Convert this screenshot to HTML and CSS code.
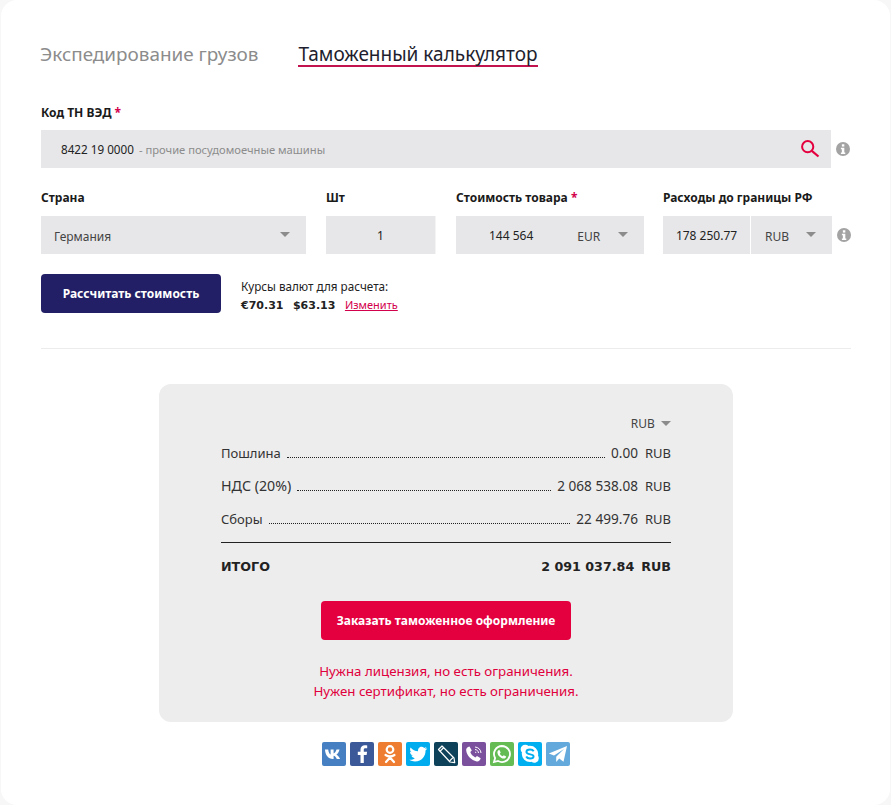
FILE: index.html
```html
<!DOCTYPE html>
<html lang="ru">
<head>
    <meta charset="UTF-8">
    <meta name="viewport" content="width=device-width, initial-scale=1.0">
    <title>Таможенный калькулятор</title>
    <link rel="stylesheet" href="styles.css">
</head>
<body>
    <div class="calc-card">
        <div class="tabs">
            <a class="tab">Экспедирование грузов</a>
            <a class="tab active">Таможенный калькулятор</a>
        </div>

        <label class="field-label code-label">Код ТН ВЭД <span class="req">*</span></label>
        <div class="code-row">
            <div class="code-input">
                <span class="code-num">8422 19 0000</span>
                <span class="code-desc">- прочие посудомоечные машины</span>
                <svg class="search-icon" width="20" height="20" viewBox="0 0 20 20">
                    <circle cx="7.7" cy="7.700" r="5.600" fill="none" stroke="#e4003f" stroke-width="2"/>
                    <path d="M11.800 11.800L18.500 17.500" fill="none" stroke="#e4003f" stroke-width="2.200"/>
                </svg>
            </div>
            <svg class="info-icon" width="14" height="14" viewBox="0 0 16 16">
                <circle cx="8" cy="8" r="8" fill="#a3a3a3"/>
                <rect x="6.700" y="2.600" width="2.800" height="2.600" fill="#fff"/>
                <path d="M5.600 6.600h3.900v5.400h1.100v1.600H5.600V12h1.100V8.200H5.600z" fill="#fff"/>
            </svg>
        </div>

        <div class="fields-row">
            <div class="field field-country">
                <label class="field-label">Страна</label>
                <div class="box select-box">
                    <span class="country-name">Германия</span>
                    <span class="caret"></span>
                </div>
            </div>
            <div class="field field-qty">
                <label class="field-label">Шт</label>
                <div class="box qty-box">1</div>
            </div>
            <div class="field field-price">
                <label class="field-label">Стоимость товара <span class="req">*</span></label>
                <div class="box price-box">
                    <span class="price-val">144 564</span>
                    <span class="cur">EUR</span>
                    <span class="caret"></span>
                </div>
            </div>
            <div class="field field-costs">
                <label class="field-label">Расходы до границы РФ</label>
                <div class="costs-wrap">
                    <div class="box costs-val">178 250.77</div>
                    <div class="box costs-cur">
                        <span class="cur">RUB</span>
                        <span class="caret"></span>
                    </div>
                </div>
            </div>
            <svg class="info-icon info-costs" width="14" height="14" viewBox="0 0 16 16">
                <circle cx="8" cy="8" r="8" fill="#a3a3a3"/>
                <rect x="6.700" y="2.600" width="2.800" height="2.600" fill="#fff"/>
                <path d="M5.600 6.600h3.900v5.400h1.100v1.600H5.600V12h1.100V8.200H5.600z" fill="#fff"/>
            </svg>
        </div>

        <div class="action-row">
            <button class="btn btn-calc">Рассчитать стоимость</button>
            <div class="rates">
                <div class="rates-line">Курсы валют для расчета:</div>
                <div class="rates-line"><b>€70.31</b><b>$63.13</b><a class="rates-link">Изменить</a></div>
            </div>
        </div>

        <div class="divider"></div>

        <div class="result">
            <div class="result-cur">RUB <span class="caret caret-small"></span></div>
            <div class="line"><span>Пошлина</span><i class="dots"></i><span class="num">0.00</span><span class="unit">RUB</span></div>
            <div class="line"><span class="num-label">НДС (20%)</span><i class="dots"></i><span class="num">2 068 538.08</span><span class="unit">RUB</span></div>
            <div class="line"><span>Сборы</span><i class="dots"></i><span class="num">22 499.76</span><span class="unit">RUB</span></div>
            <div class="total">
                <span>ИТОГО</span>
                <span class="total-sum">2 091 037.84<span class="unit">RUB</span></span>
            </div>
            <button class="btn btn-order">Заказать таможенное оформление</button>
            <div class="notes">
                <p>Нужна лицензия, но есть ограничения.</p>
                <p>Нужен сертификат, но есть ограничения.</p>
            </div>
        </div>

        <div class="share">
            <a class="share-btn vk"><svg viewBox="0 0 24 24"><path d="M3 7.500h3.200c.2 2.600 1.300 4.600 2.400 5V7.500h3v3.900c1.100-.2 2.300-1.800 2.900-3.900h3c-.5 2.600-2 4.500-3.100 5.300 1.200.6 2.800 2 3.700 4.200h-3.300c-.7-1.700-1.900-3-3.200-3.200v3.200h-.7C6.300 17 3.200 13 3 7.500z" fill="#fff"/></svg></a>
            <a class="share-btn fb"><svg viewBox="0 0 24 24"><path d="M13.800 21v-8h2.800l.5-3.200h-3.300V7.800c0-1 .4-1.500 1.600-1.500h1.800V3.400C16.700 3.300 15.800 3.200 14.900 3.200c-2.700 0-4.400 1.600-4.400 4.400v2.200H7.800V13h2.700v8z" fill="#fff"/></svg></a>
            <a class="share-btn ok"><svg viewBox="0 0 24 24"><g fill="none" stroke="#fff" stroke-width="2.200" stroke-linecap="round"><circle cx="12" cy="7.500" r="3.300"/><path d="M7.500 13c3 1.900 6 1.900 9 0M12 15.500L8 20M12 15.500l4 4.500"/></g></svg></a>
            <a class="share-btn tw"><svg viewBox="0 0 24 24"><path d="M21 6.500c-.7.300-1.400.5-2.100.6.800-.5 1.300-1.200 1.600-2-.7.400-1.500.7-2.300.9-1.500-1.600-4-1.500-5.300.1-.8 1-1 2.100-.8 3.100-3-.1-5.700-1.500-7.500-3.800-1 1.700-.5 3.800 1.100 4.900-.6 0-1.200-.2-1.700-.5 0 1.800 1.300 3.300 3 3.700-.5.100-1.100.2-1.700.1.500 1.500 1.900 2.500 3.500 2.600-1.600 1.200-3.500 1.800-5.500 1.500 1.700 1.100 3.700 1.700 5.700 1.700 6.900 0 10.800-5.800 10.500-11 .7-.5 1.300-1.200 1.800-1.900z" fill="#fff"/></svg></a>
            <a class="share-btn lj"><svg viewBox="0 0 24 24"><g fill="none" stroke="#fff" stroke-width="1.200" stroke-linejoin="round"><path d="M4.500 7.500L8 4l12 12 .7 4.700-4.700-.7z"/><path d="M5.800 9.500L9.800 5.500M15.600 19l3.400-3.400"/></g></svg></a>
            <a class="share-btn vb"><svg viewBox="0 0 24 24"><path d="M7.500 4.500l2.300 3.900-1.500 1.700c.8 2.400 2.500 4.200 5 5.300l1.700-1.500 3.700 2.400c-.5 2.200-2.200 3.500-4 3.100-5.500-1.300-9.800-5.700-10.500-11-.3-1.900 1.100-3.500 3.300-3.900z" fill="#fff"/><path d="M13 5c3.300.2 5.800 2.700 6 6M13 7.500c1.900.1 3.400 1.600 3.500 3.500M13 10c.6 0 1 .4 1 1" fill="none" stroke="#fff" stroke-width="1"/></svg></a>
            <a class="share-btn wa"><svg viewBox="0 0 24 24"><path d="M12 4a8 8 0 0 0-6.900 12L4 20l4.100-1A8 8 0 1 0 12 4z" fill="none" stroke="#fff" stroke-width="1.800"/><path d="M9.300 7.800l1.400 2.700-.9 1.200c.6 1.200 1.500 2 2.800 2.600l1.100-1 2.500 1.300c-.2 1.400-1.300 2.100-2.500 2-3.100-.4-6-3.200-6.300-6.200-.1-1.300.9-2.400 2.400-2.600z" fill="#fff"/></svg></a>
            <a class="share-btn sk"><svg viewBox="0 0 24 24"><path d="M12 3.800a8.200 8.200 0 0 1 8.200 8.200c0 .6 0 1-.2 1.500.5.800.8 1.700.8 2.700a4.500 4.500 0 0 1-7.300 3.600c-.5.100-1 .2-1.500.2A8.200 8.200 0 0 1 3.800 12c0-.5 0-1 .2-1.500A4.500 4.500 0 0 1 10.500 4c.5-.1 1-.2 1.500-.2z" fill="#fff"/><path d="M15.700 9.300C15 8 13.600 7.500 12 7.500c-2 0-3.600 1-3.600 2.500 0 3 7.200 1.700 7.200 4.200 0 1.500-1.700 2.300-3.600 2.300-1.700 0-3.100-.6-3.800-2" fill="none" stroke="#00aff0" stroke-width="1.900"/></svg></a>
            <a class="share-btn tg"><svg viewBox="0 0 24 24"><path d="M21 4L2.800 11.600l5.200 2L18 7l-7.800 7.700v5.300l3-3.500 4.300 3.200z" fill="#fff"/></svg></a>
        </div>
    </div>
</body>
</html>
```

FILE: styles.css
```css
/* Base styles */
* {
    margin: 0;
    padding: 0;
    box-sizing: border-box;
}

body {
    font-family: 'Noto Sans', Tahoma, Verdana, sans-serif;
    font-size: 12px;
    color: #222;
    background-color: #f7f7f7;
    height: 805px;
    overflow: hidden;
}

/* Card */
.calc-card {
    background-color: #fff;
    border-radius: 16px;
    margin: 0 1px;
    height: 805px;
    padding: 41px 39px 0 40px;
}

/* Tabs */
.tabs {
    display: flex;
    gap: 40px;
    height: 26px;
    margin-left: -1px;
}

.tab {
    font-size: 18.900px;
    line-height: 26px;
    color: #8c8c8c;
}

.tab.active {
    font-size: 19px;
    color: #1e1e2e;
    border-bottom: 2px solid #c2134f;
}

/* Form */
.field-label {
    display: block;
    font-size: 12px;
    font-weight: 700;
    line-height: 16px;
    color: #1a1a1a;
}

.code-label {
    margin-top: 38px;
}

.req {
    color: #d3004c;
}

.code-row {
    display: flex;
    align-items: center;
    margin-top: 9px;
}

.code-input {
    width: 790px;
    height: 38px;
    background-color: #e7e7e9;
    display: flex;
    align-items: center;
    padding-left: 20px;
    position: relative;
}

.code-num {
    font-size: 11.700px;
    color: #222;
}

.code-desc {
    font-size: 11.200px;
    color: #8c8c8c;
    margin-left: 5px;
}

.search-icon {
    position: absolute;
    right: 11px;
    top: 9px;
}

.info-icon {
    margin-left: 5px;
    flex: none;
}

.fields-row {
    display: flex;
    margin-top: 22px;
}

.field {
    flex: none;
}

.field-country {
    width: 265px;
    margin-right: 20px;
}

.field-qty {
    width: 110px;
    margin-right: 20px;
}

.field-price {
    width: 188px;
    margin-right: 19px;
}

.field-costs {
    width: 169px;
}

.info-costs {
    align-self: flex-end;
    margin-bottom: 12px;
}

.box {
    height: 38px;
    background-color: #e7e7e9;
    display: flex;
    align-items: center;
    margin-top: 10px;
    position: relative;
}

.select-box {
    padding-left: 13px;
    color: #444;
}

.country-name {
    padding-top: 2px;
}

.qty-box {
    justify-content: center;
    border-right: 1px solid #f4f4f4;
}

.price-box {
    padding-left: 33px;
}

.price-box .cur {
    margin-left: 44px;
}

.cur {
    color: #444;
    padding-top: 2px;
}

.caret {
    width: 0;
    height: 0;
    border-left: 5px solid transparent;
    border-right: 5px solid transparent;
    border-top: 5px solid #8c8c8c;
    position: absolute;
    right: 16px;
    top: 16px;
}

.costs-wrap {
    display: flex;
    gap: 1px;
}

.costs-val {
    width: 87px;
    justify-content: center;
}

.costs-cur {
    width: 81px;
    padding-left: 14px;
}

/* Action row */
.action-row {
    display: flex;
    margin-top: 20px;
    height: 39px;
}

.btn {
    border: none;
    border-radius: 4px;
    font-family: inherit;
    font-size: 12px;
    font-weight: 700;
    color: #fff;
}

.btn-calc {
    width: 180px;
    height: 39px;
    background-color: #231f66;
}

.rates {
    margin-left: 20px;
    padding-top: 3px;
    font-size: 11.700px;
}

.rates-line {
    height: 18px;
    line-height: 18px;
}

.rates-line b {
    font-family: 'DejaVu Sans', sans-serif;
    font-size: 11px;
    margin-right: 9.500px;
}

.rates-link {
    font-size: 11px;
    color: #d3004c;
    text-decoration: underline;
}

.divider {
    border-top: 1px solid #ececec;
    margin-top: 35px;
}

/* Result block */
.result {
    width: 574px;
    height: 338px;
    margin: 35px auto 0;
    background-color: #ededee;
    border-radius: 12px;
    padding: 32px 62px 0;
    font-size: 13px;
}

.result-cur {
    text-align: right;
    font-size: 12px;
    line-height: 16px;
    color: #444;
}

.caret-small {
    display: inline-block;
    position: static;
    margin-left: 3px;
    vertical-align: 2px;
}

.line {
    display: flex;
    align-items: baseline;
    height: 18px;
    line-height: 18px;
    margin-top: 15px;
    color: #333;
}

.result-cur + .line {
    margin-top: 12px;
}

.num {
    font-size: 13.600px;
}

.num-label {
    font-size: 14.200px;
}

.dots {
    flex: 1;
    border-bottom: 1px dotted #222;
    margin: 0 6px;
}

.unit {
    margin-left: 7px;
}

.total {
    display: flex;
    justify-content: space-between;
    border-top: 1px solid #222;
    margin-top: 14px;
    padding-top: 15px;
    font-family: 'DejaVu Sans', sans-serif;
    font-size: 12.700px;
    font-weight: 700;
    line-height: 18px;
}

.btn-order {
    display: block;
    width: 250px;
    height: 39px;
    margin: 25px auto 0;
    background-color: #e4003f;
}

.notes {
    margin-top: 21px;
    text-align: center;
    font-size: 13.300px;
    color: #e0003c;
    line-height: 20px;
}

/* Share buttons */
.share {
    display: flex;
    justify-content: center;
    gap: 4px;
    margin-top: 20px;
}

.share-btn {
    width: 24px;
    height: 24px;
    border-radius: 2px;
    display: block;
}

.share-btn svg {
    display: block;
    width: 24px;
    height: 24px;
}

.vk { background-color: #4680c2; }
.fb { background-color: #3b5998; }
.ok { background-color: #ee7d31; }
.tw { background-color: #00aced; }
.lj { background-color: #0d425a; }
.vb { background-color: #7b519d; }
.wa { background-color: #65bc54; }
.sk { background-color: #00aff0; }
.tg { background-color: #64a9dc; }
```
